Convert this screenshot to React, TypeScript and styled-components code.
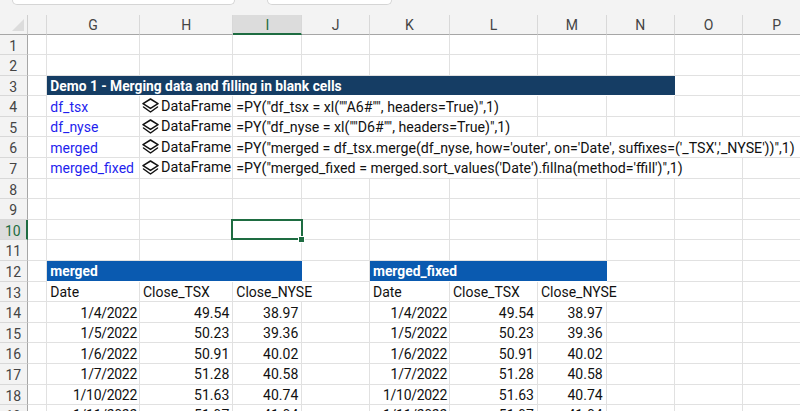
import React from "react";
import styled, { createGlobalStyle } from "styled-components";

const Global = createGlobalStyle`
  html, body { margin: 0; padding: 0; background: #fff; overflow: hidden; }
  #root { width: 800px; height: 411px; overflow: hidden; }
`;

const Page = styled.div`
  width: 800px;
  height: 411px;
  overflow: hidden;
  background: #fff;
  font-family: Roboto, "Liberation Sans", sans-serif;
`;

const TopBar = styled.div`
  height: 14.5px;
  background: #f3f3f3;
  display: flex;
  align-items: flex-start;
  gap: 32px;
  padding-left: 12px;
`;

const FieldBox = styled.div<{ $w: number }>`
  width: ${(p) => p.$w}px;
  height: 4px;
  background: #fff;
  border: 1px solid #d5d5d5;
  border-top: 0;
  border-radius: 0 0 7px 7px;
  flex: none;
`;

const Sheet = styled.div`
  display: grid;
  grid-template-columns: 27.5px 19.8px 92.7px 93.3px 69px 67.7px 80px 88px 68.7px 68px 68.6px 68px;
  grid-template-rows: 20px repeat(19, 20.6px);
`;

const Corner = styled.div`
  background: #f3f3f3;
  border-bottom: 1px solid #a6a6a6;
  border-right: 1px solid #cfcfcf;
  box-sizing: border-box;
  display: flex;
  align-items: flex-end;
  justify-content: flex-end;
  padding: 0 3px 3px 0;
`;

const CornerMark = styled.div`
  width: 0;
  height: 0;
  border-left: 12px solid transparent;
  border-bottom: 12px solid #dcdcdc;
`;

const ColHead = styled.div<{ $on?: boolean }>`
  box-sizing: border-box;
  background: ${(p) => (p.$on ? "#dcdcdc" : "#f3f3f3")};
  border-right: 1px solid #d8d8d8;
  border-bottom: ${(p) => (p.$on ? "2px solid #1e6c41" : "1px solid #a6a6a6")};
  color: ${(p) => (p.$on ? "#1e6c41" : "#444")};
  font-size: 14px;
  line-height: 20px;
  text-align: center;
`;

const RowHead = styled.div<{ $on?: boolean }>`
  box-sizing: border-box;
  background: ${(p) => (p.$on ? "#dcdcdc" : "#f3f3f3")};
  border-right: ${(p) => (p.$on ? "2px solid #1e6c41" : "1px solid #a6a6a6")};
  border-bottom: 1px solid #d8d8d8;
  color: ${(p) => (p.$on ? "#1e6c41" : "#444")};
  font-size: 14px;
  line-height: 22px;
  text-align: center;
`;

const Cell = styled.div<{
  $right?: boolean;
  $open?: boolean;
  $tone?: string;
  $selected?: boolean;
  $size?: number;
  $track?: number;
}>`
  box-sizing: border-box;
  position: relative;
  padding: 1px ${(p) => (p.$track ? "2px" : "3px")} 0 3px;
  border-bottom: 1px solid #e1e1e1;
  border-right: ${(p) => (p.$open ? "0" : "1px solid #e1e1e1")};
  color: ${(p) => p.$tone ?? "#111"};
  font-size: ${(p) => p.$size ?? 14}px;
  letter-spacing: ${(p) => p.$track ?? 0}px;
  line-height: 20px;
  white-space: nowrap;
  display: flex;
  justify-content: ${(p) => (p.$right ? "flex-end" : "flex-start")};
  align-items: center;
  ${(p) =>
    p.$selected
      ? `&::after {
          content: "";
          position: absolute;
          left: -2px; top: -1px; right: -2px; bottom: -1px;
          border: 2px solid #1e6c41;
        }
        &::before {
          content: "";
          position: absolute;
          right: -3.5px; bottom: -3.5px;
          width: 7px; height: 7px;
          background: #1e6c41;
          border: 1px solid #fff;
          box-sizing: border-box;
          z-index: 1;
        }`
      : ""}
`;

const Banner = styled.div<{ $span: number; $dark?: boolean }>`
  grid-column: span ${(p) => p.$span};
  box-sizing: border-box;
  background: ${(p) => (p.$dark ? "#153d64" : "#0a5ab0")};
  color: #fff;
  font-size: 13.8px;
  font-weight: 700;
  line-height: 20px;
  padding: 0 3px;
  white-space: nowrap;
  margin-bottom: 1px;
`;

const Stack = styled.svg`
  width: 17px;
  height: 16px;
  flex: none;
  margin: -1px 2px 0 -1px;
`;

const StackIcon = () => (
  <Stack viewBox="0 0 17 16" fill="none" stroke="#111" strokeWidth="1.5" strokeLinejoin="round" strokeLinecap="round">
    <path d="M8.5 1 16 5.7 8.5 10.4 1 5.7Z" />
    <path d="M1.5 9 8.5 14 15.5 9" />
  </Stack>
);

const cols = ["F", "G", "H", "I", "J", "K", "L", "M", "N", "O", "P"];
const blue = "#1f1fee";

const formulas: [string, string, number][] = [
  ["df_tsx", `=PY("df_tsx = xl(""A6#"", headers=True)",1)`, 3],
  ["df_nyse", `=PY("df_nyse = xl(""D6#"", headers=True)",1)`, 3],
  ["merged", `=PY("merged = df_tsx.merge(df_nyse, how='outer', on='Date', suffixes=('_TSX','_NYSE'))",1)`, 7],
  ["merged_fixed", `=PY("merged_fixed = merged.sort_values('Date').fillna(method='ffill')",1)`, 6],
];

const data: [string, string, string][] = [
  ["1/4/2022", "49.54", "38.97"],
  ["1/5/2022", "50.23", "39.36"],
  ["1/6/2022", "50.91", "40.02"],
  ["1/7/2022", "51.28", "40.58"],
  ["1/10/2022", "51.63", "40.74"],
  ["1/11/2022", "51.97", "41.04"],
];

const Blanks = ({ n, row }: { n: number; row: number }) => (
  <>
    {Array.from({ length: n }, (_, i) => (
      <Cell key={`${row}-${i}`} />
    ))}
  </>
);

export default function App() {
  return (
    <Page>
      <Global />
      <TopBar>
        <FieldBox $w={221} />
        <FieldBox $w={123} />
      </TopBar>
      <Sheet>
        <Corner>
          <CornerMark />
        </Corner>
        {cols.map((c) => (
          <ColHead key={c} $on={c === "I"}>
            {c === "F" ? "" : c}
          </ColHead>
        ))}

        {[1, 2].map((r) => (
          <React.Fragment key={r}>
            <RowHead>{r}</RowHead>
            <Blanks n={11} row={r} />
          </React.Fragment>
        ))}

        <RowHead>3</RowHead>
        <Cell />
        <Banner $span={8} $dark>
          Demo 1 - Merging data and filling in blank cells
        </Banner>
        <Blanks n={2} row={3} />

        {formulas.map(([name, text, open], i) => (
          <React.Fragment key={name}>
            <RowHead>{4 + i}</RowHead>
            <Cell />
            <Cell $tone={blue}>{name}</Cell>
            <Cell $size={14.4}>
              <StackIcon />
              DataFrame
            </Cell>
            {Array.from({ length: 8 }, (_, k) => (
              <Cell key={k} $open={k < open} $size={14.2}>
                {k === 0 ? text : ""}
              </Cell>
            ))}
          </React.Fragment>
        ))}

        {[8, 9, 10, 11].map((r) => (
          <React.Fragment key={r}>
            <RowHead $on={r === 10}>{r}</RowHead>
            <Cell />
            <Cell />
            <Cell />
            <Cell $selected={r === 10} />
            <Blanks n={7} row={r} />
          </React.Fragment>
        ))}

        <RowHead>12</RowHead>
        <Cell />
        <Banner $span={3}>merged</Banner>
        <Cell />
        <Banner $span={3}>merged_fixed</Banner>
        <Blanks n={3} row={12} />

        <RowHead>13</RowHead>
        <Cell />
        <Cell>Date</Cell>
        <Cell>Close_TSX</Cell>
        <Cell $open>Close_NYSE</Cell>
        <Cell />
        <Cell>Date</Cell>
        <Cell>Close_TSX</Cell>
        <Cell $open>Close_NYSE</Cell>
        <Blanks n={3} row={13} />

        {data.map(([d, a, b], i) => (
          <React.Fragment key={d}>
            <RowHead>{14 + i}</RowHead>
            <Cell />
            <Cell $right $track={-0.3}>{d}</Cell>
            <Cell $right>{a}</Cell>
            <Cell $right>{b}</Cell>
            <Cell />
            <Cell $right $track={-0.3}>{d}</Cell>
            <Cell $right>{a}</Cell>
            <Cell $right>{b}</Cell>
            <Blanks n={3} row={14 + i} />
          </React.Fragment>
        ))}
      </Sheet>
    </Page>
  );
}
